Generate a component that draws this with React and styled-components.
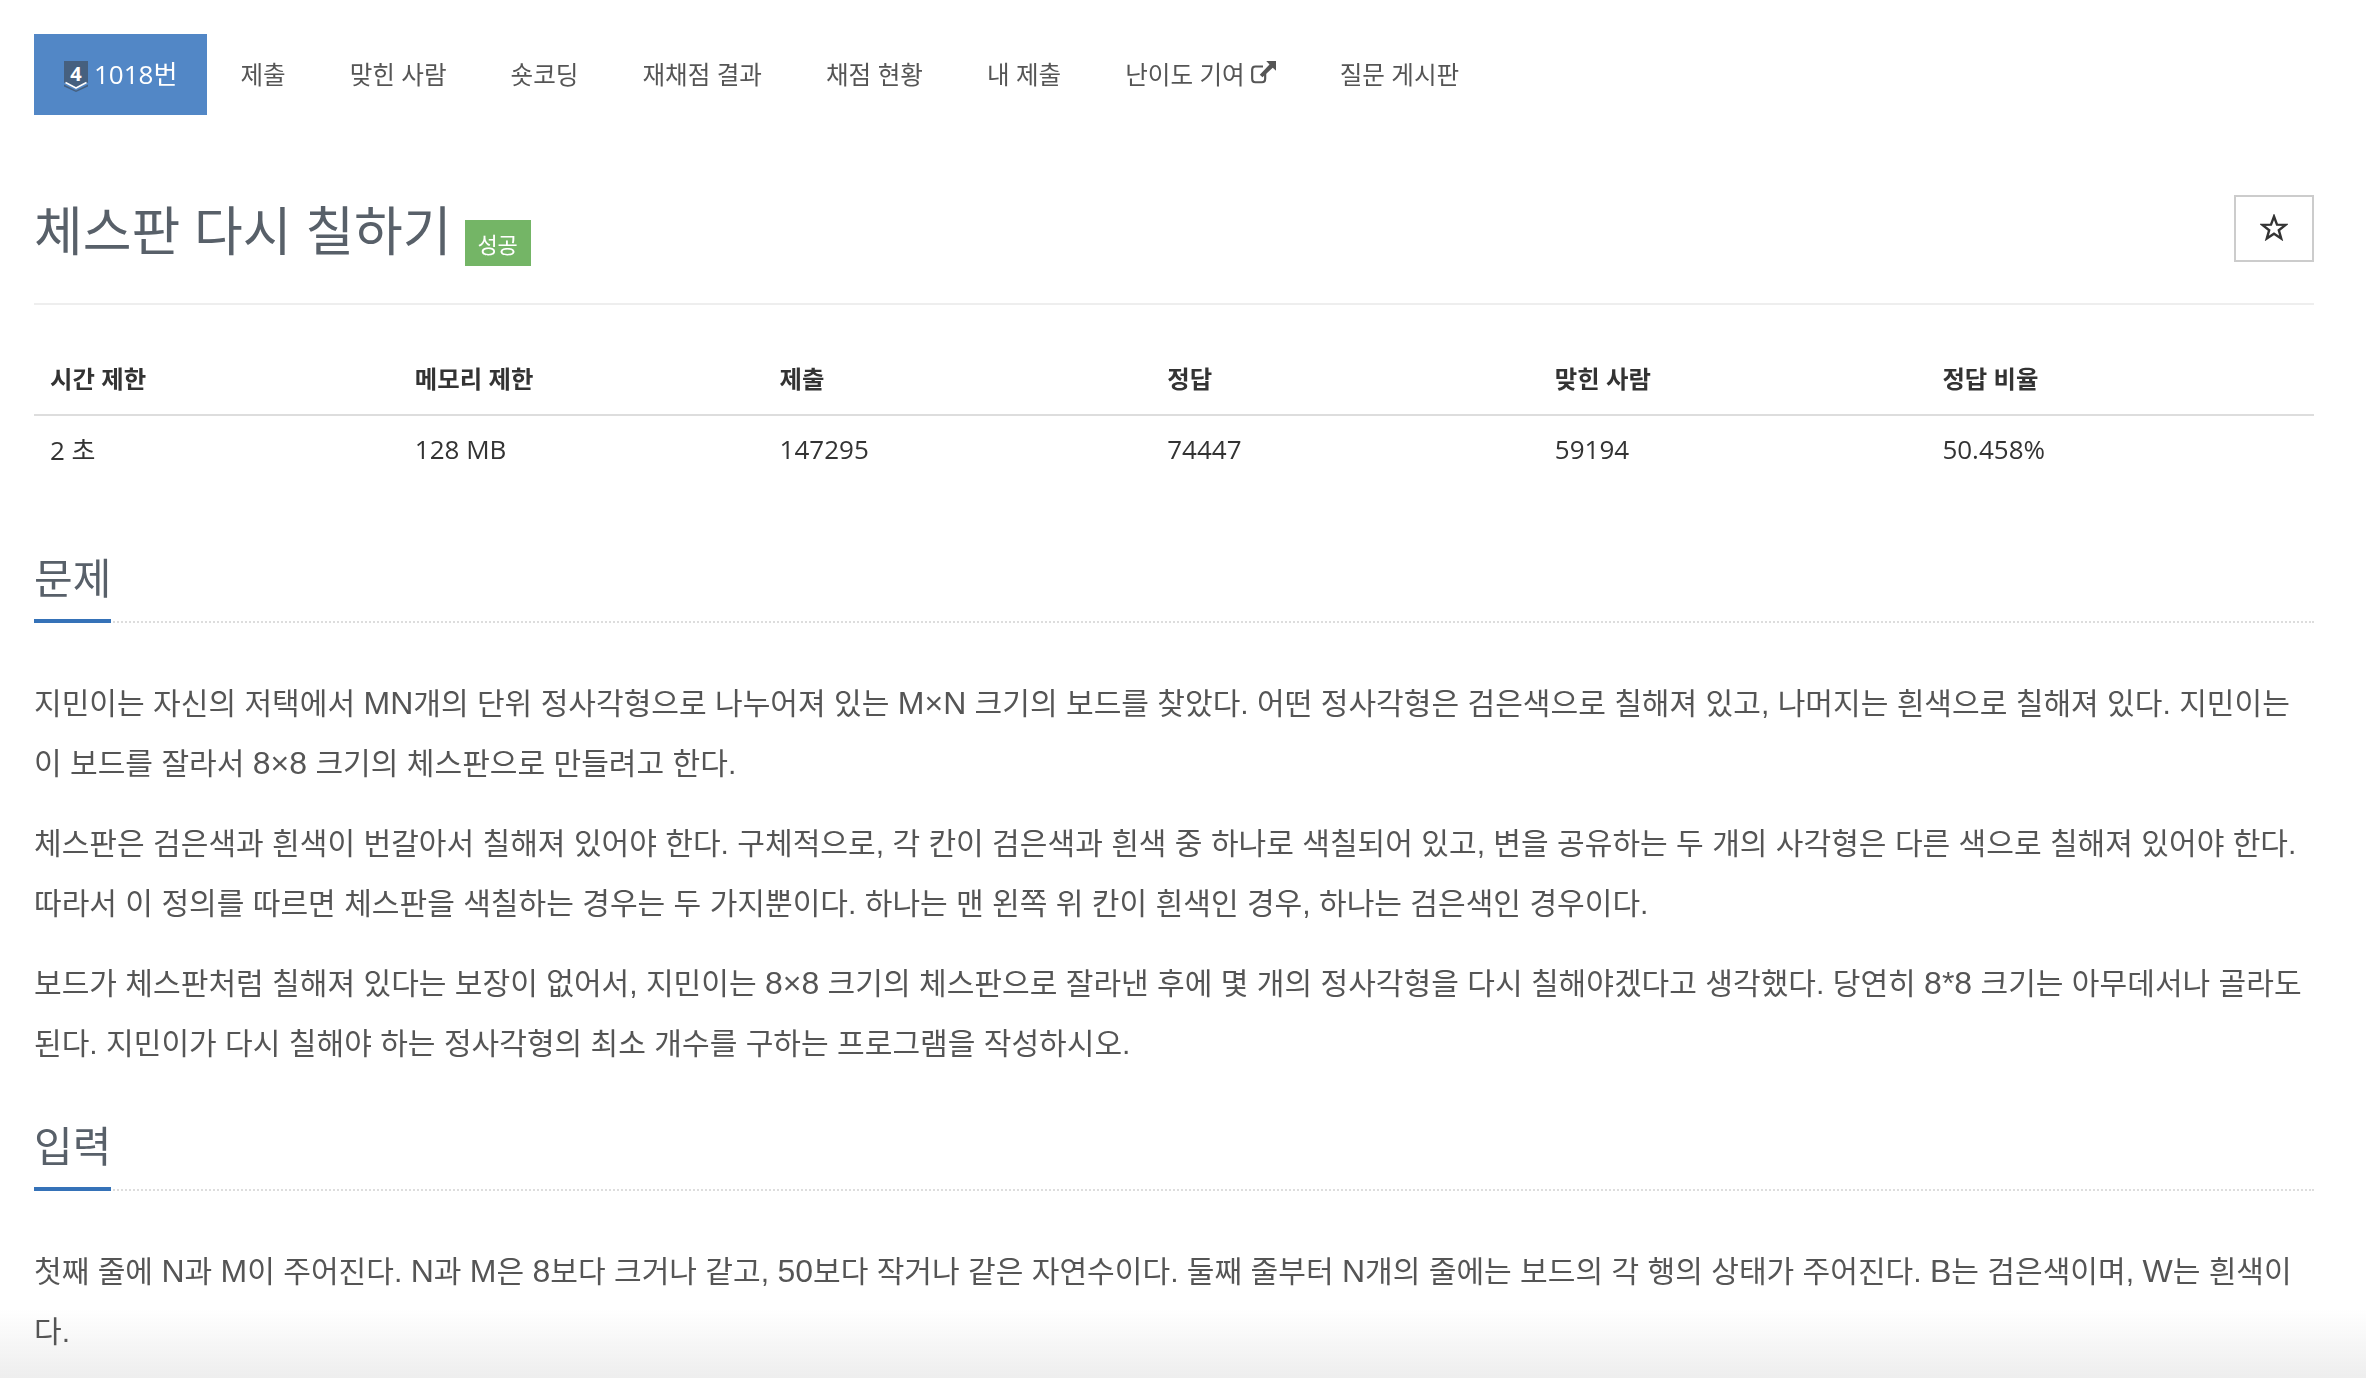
import React from 'react'
import styled, { createGlobalStyle } from 'styled-components'

const GlobalStyle = createGlobalStyle`
    html {
        background: #fff;
    }
    html, body {
        margin: 0;
        padding: 0;
    }
    body {
        font-family: "Open Sans", "Noto Sans CJK KR", sans-serif;
        color: #333;
        overflow: hidden;
    }
`

const tabs = [
    { label: '제출' },
    { label: '맞힌 사람' },
    { label: '숏코딩' },
    { label: '재채점 결과' },
    { label: '채점 현황' },
    { label: '내 제출' },
    { label: '난이도 기여', external: true },
    { label: '질문 게시판' }
]

const stats = [
    { head: '시간 제한', value: '2 초' },
    { head: '메모리 제한', value: '128 MB' },
    { head: '제출', value: '147295' },
    { head: '정답', value: '74447' },
    { head: '맞힌 사람', value: '59194' },
    { head: '정답 비율', value: '50.458%' }
]

const problem = [
    '지민이는 자신의 저택에서 MN개의 단위 정사각형으로 나누어져 있는 M×N 크기의 보드를 찾았다. 어떤 정사각형은 검은색으로 칠해져 있고, 나머지는 흰색으로 칠해져 있다. 지민이는 이 보드를 잘라서 8×8 크기의 체스판으로 만들려고 한다.',
    '체스판은 검은색과 흰색이 번갈아서 칠해져 있어야 한다. 구체적으로, 각 칸이 검은색과 흰색 중 하나로 색칠되어 있고, 변을 공유하는 두 개의 사각형은 다른 색으로 칠해져 있어야 한다. 따라서 이 정의를 따르면 체스판을 색칠하는 경우는 두 가지뿐이다. 하나는 맨 왼쪽 위 칸이 흰색인 경우, 하나는 검은색인 경우이다.',
    '보드가 체스판처럼 칠해져 있다는 보장이 없어서, 지민이는 8×8 크기의 체스판으로 잘라낸 후에 몇 개의 정사각형을 다시 칠해야겠다고 생각했다. 당연히 8*8 크기는 아무데서나 골라도 된다. 지민이가 다시 칠해야 하는 정사각형의 최소 개수를 구하는 프로그램을 작성하시오.'
]

const input = '첫째 줄에 N과 M이 주어진다. N과 M은 8보다 크거나 같고, 50보다 작거나 같은 자연수이다. 둘째 줄부터 N개의 줄에는 보드의 각 행의 상태가 주어진다. B는 검은색이며, W는 흰색이다.'

// latin runs sit a little larger than the hangul around them
const withLatin = text =>
    text.split(/([A-Z0-9×*]+)/).map((part, i) => (i % 2 ? <Latin key={i}>{part}</Latin> : part))

const TierIcon = () => (
    <TierSvg viewBox="0 0 24 31" aria-hidden="true">
        <path d="M0 0H24V21.5L12 28L0 21.5Z" fill="#46607f" />
        <path d="M0 23.5L12 29.5L24 23.5V25.5L12 31L0 25.5Z" fill="#46607f" />
        <path d="M1.5 21.5L12 27L22.5 21.5" fill="none" stroke="#fff" strokeWidth="1.6" />
        <TierNumber x="12" y="20" textAnchor="middle">4</TierNumber>
    </TierSvg>
)

const ExternalIcon = () => (
    <ExternalSvg viewBox="0 0 24 22" aria-hidden="true">
        <path
            d="M14 10.5V16C14 18 13 19.5 11 19.5H5C3 19.5 2 18 2 16V8C2 6 3 5 5 5H12"
            fill="none"
            stroke="currentColor"
            strokeWidth="2"
        />
        <path d="M15 0H24V9L21 6.2L11.5 15L9 12.5L18 3.2Z" fill="currentColor" />
    </ExternalSvg>
)

const StarIcon = () => (
    <StarSvg viewBox="0 0 28 27" aria-hidden="true">
        <path
            d="M14 2.5L17 10.6L25.6 10.9L18.8 16.2L21.2 24.5L14 19.7L6.8 24.5L9.2 16.2L2.4 10.9L11 10.6Z"
            fill="none"
            stroke="currentColor"
            strokeWidth="2.4"
        />
    </StarSvg>
)

const App = () => {
    return (
        <Page>
            <GlobalStyle />

            <TabBar>
                <ActiveTab>
                    <TierIcon />
                    1018번
                </ActiveTab>
                {tabs.map(tab => (
                    <Tab key={tab.label}>
                        {tab.label}
                        {tab.external && <ExternalIcon />}
                    </Tab>
                ))}
            </TabBar>

            <TitleRow>
                <TitleArea>
                    <Title>체스판 다시 칠하기</Title>
                    <Badge>성공</Badge>
                </TitleArea>
                <StarButton>
                    <StarIcon />
                </StarButton>
            </TitleRow>

            <StatTable>
                {stats.map(item => (
                    <StatHead key={item.head}>{item.head}</StatHead>
                ))}
                {stats.map(item => (
                    <StatCell key={item.head}>{item.value}</StatCell>
                ))}
            </StatTable>

            <Section>
                <SectionHead>
                    <SectionTitle>문제</SectionTitle>
                </SectionHead>
                {problem.map(text => (
                    <Paragraph key={text}>{withLatin(text)}</Paragraph>
                ))}
            </Section>

            <Section>
                <SectionHead>
                    <SectionTitle>입력</SectionTitle>
                </SectionHead>
                <Paragraph>{withLatin(input)}</Paragraph>
            </Section>

            <BottomFade />
        </Page>
    )
}

export default App

const Page = styled.div`
    box-sizing: border-box;
    width: 2366px;
    height: 1378px;
    padding: 34px 52px 0 34px;
    overflow: hidden;
`

const TabBar = styled.div`
    display: flex;
    align-items: stretch;
    height: 81px;
    gap: 2px;
`

const Tab = styled.div`
    display: flex;
    align-items: center;
    padding: 0 31px 3px;
    font-size: 24.6px;
    color: #555;
`

const ActiveTab = styled(Tab)`
    padding: 0 30px 3px;
    background: #5287c6;
    color: #fff;
    font-size: 26px;
`

const TierSvg = styled.svg`
    width: 24px;
    height: 31px;
    margin: 6px 6px 0 0;
    flex-shrink: 0;
    overflow: visible;
`

const TierNumber = styled.text`
    font-family: "Open Sans", sans-serif;
    font-size: 20px;
    font-weight: 700;
    fill: #fff;
`

const ExternalSvg = styled.svg`
    width: 26px;
    height: 24px;
    margin-left: 5px;
    margin-top: 0;
`

const TitleRow = styled.div`
    display: flex;
    justify-content: space-between;
    align-items: flex-start;
    margin-top: 80px;
    height: 108px;
    border-bottom: 2px solid #eee;
`

const TitleArea = styled.div`
    display: flex;
    align-items: flex-start;
    gap: 13px;
`

const Title = styled.h1`
    margin: 0;
    font-size: 53px;
    line-height: 72px;
    font-weight: 400;
    color: #586069;
`

const Badge = styled.span`
    display: flex;
    align-items: center;
    justify-content: center;
    width: 66px;
    height: 46px;
    margin-top: 25px;
    background: #74b566;
    color: #fff;
    font-size: 22px;
`

const StarButton = styled.button`
    display: flex;
    align-items: center;
    justify-content: center;
    box-sizing: border-box;
    width: 80px;
    height: 67px;
    padding: 0 0 3px;
    background: #fff;
    border: 2px solid #ccc;
    color: #333;
`

const StarSvg = styled.svg`
    width: 28px;
    height: 27px;
`

const StatTable = styled.div`
    display: grid;
    grid-template-columns: 16% 16% 17% 17% 17% 17%;
    margin: 48px 0 62px;
`

const StatHead = styled.div`
    box-sizing: border-box;
    height: 63px;
    padding: 0 16px 13px;
    display: flex;
    align-items: center;
    border-bottom: 2px solid #ddd;
    font-size: 24.4px;
    font-weight: 700;
    color: #333;
`

const StatCell = styled.div`
    box-sizing: border-box;
    height: 66px;
    padding: 0 16px;
    display: flex;
    align-items: center;
    font-size: 26px;
    color: #333;
`

const Section = styled.section`
    margin-top: 38px;
`

const SectionHead = styled.div`
    height: 79px;
    box-sizing: border-box;
    border-bottom: 2px dotted #ddd;
    margin-bottom: 51px;
`

const SectionTitle = styled.h2`
    display: inline-block;
    box-sizing: border-box;
    margin: 0;
    height: 79px;
    min-width: 76px;
    border-bottom: 4px solid #3572b8;
    font-size: 42px;
    line-height: 68px;
    font-weight: 400;
    color: #586069;
`

const Paragraph = styled.p`
    margin: 0 0 20px;
    font-family: "Liberation Sans", "Noto Sans CJK KR", sans-serif;
    font-size: 30.08px;
    line-height: 60px;
    color: #555;
`

const Latin = styled.span`
    font-size: 32px;
    line-height: 1;
`

const BottomFade = styled.div`
    position: fixed;
    z-index: -1;
    left: 0;
    right: 0;
    bottom: 0;
    height: 68px;
    background: linear-gradient(to bottom, rgba(238, 238, 238, 0), #eee);
    pointer-events: none;
`
